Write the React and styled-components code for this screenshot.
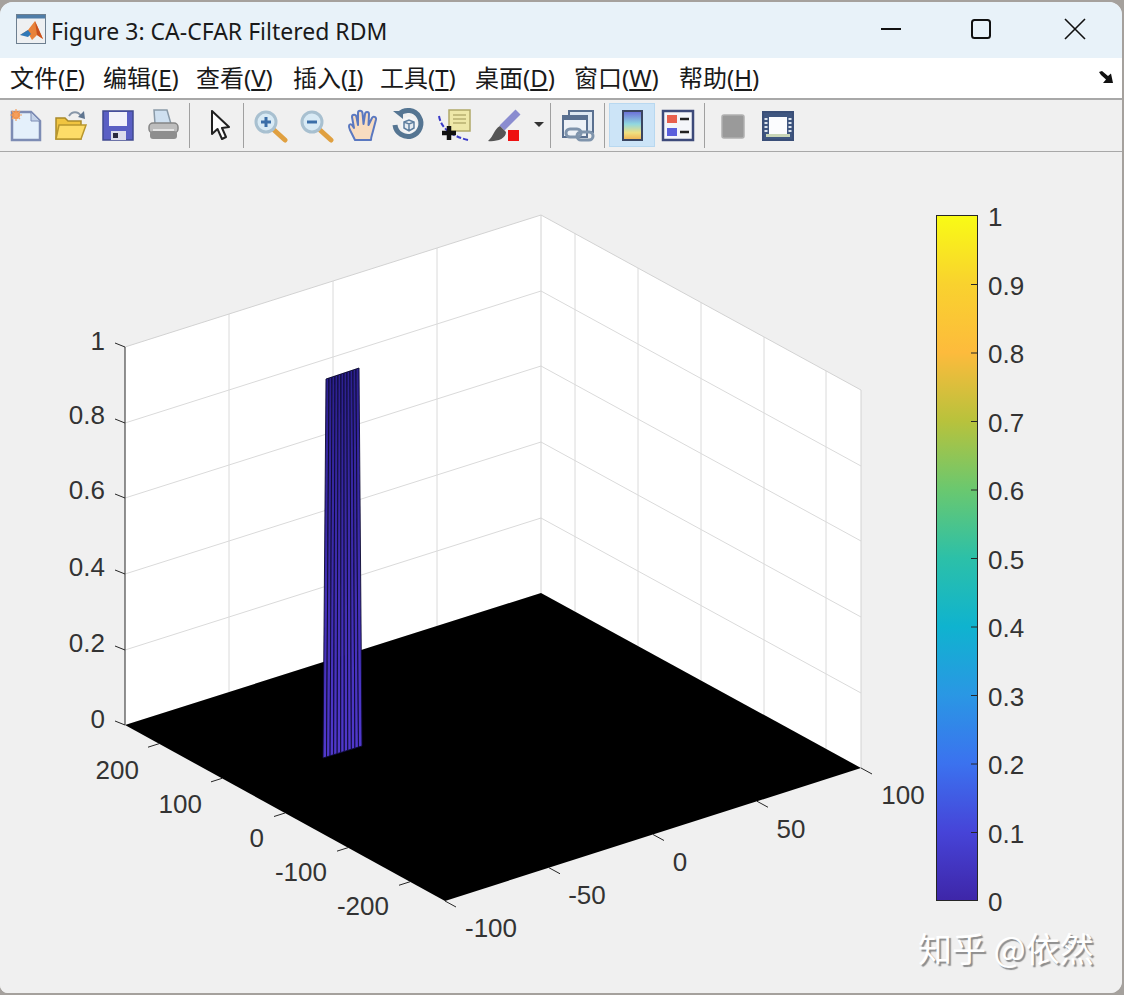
import React from "react";
import styled, { createGlobalStyle } from "styled-components";

const GlobalStyle = createGlobalStyle`
  html, body {
    margin: 0;
    padding: 0;
    background-color: #a5a19d;
  }
`;

const MENU_ITEMS = [
  ["文件", "F", 93],
  ["编辑", "E", 93],
  ["查看", "V", 97],
  ["插入", "I", 87],
  ["工具", "T", 95],
  ["桌面", "D", 99],
  ["窗口", "W", 105],
  ["帮助", "H", 84],
];

// label, tick y, label baseline
const Z_TICKS = [
  ["1", 347, 350],
  ["0.8", 423, 424],
  ["0.6", 498, 499],
  ["0.4", 574, 576],
  ["0.2", 650, 652],
  ["0", 725, 728],
];

const Y_TICKS = [
  ["200", 139, 770, 159],
  ["100", 202, 804, 222],
  ["0", 264, 838, 285],
  ["-100", 327, 872, 348],
  ["-200", 389, 906, 410],
];

const X_TICKS = [
  ["-100", 491, 928, 445],
  ["-50", 587, 895, 549],
  ["0", 680, 862, 653],
  ["50", 791, 829, 757],
  ["100", 903, 795, 861],
];

const PARULA = [
  [0, "#3e26a8"],
  [0.1, "#4644d8"],
  [0.2, "#3b72ef"],
  [0.3, "#2a97e4"],
  [0.4, "#0fb3cf"],
  [0.5, "#2cc0a8"],
  [0.6, "#6ac86f"],
  [0.7, "#b8c23c"],
  [0.8, "#fdbb3c"],
  [0.9, "#f9d22e"],
  [1, "#f9fb15"],
];

const NewIcon = () => (
  <svg width="46" height="44">
    <path d="M10 9H29L38 18V37H10Z" fill="#e4f0fb" stroke="#7d8cb4" strokeWidth="2.5" />
    <path d="M29 9V18H38Z" fill="#c4d2e8" stroke="#7d8cb4" />
    <circle cx="14" cy="12" r="4" fill="#f08a3c" />
    <path d="M14 6V18M8 12H20M10 8L18 16M18 8L10 16" stroke="#f4a060" strokeWidth="1.2" />
  </svg>
);

const OpenIcon = () => (
  <svg width="46" height="44">
    <path d="M8 15H17L20 18H33V36H8Z" fill="#f0c440" stroke="#a8892a" strokeWidth="1.5" />
    <path d="M8 36L11 22H38L33 36Z" fill="#fddc68" stroke="#b8962e" strokeWidth="1.5" />
    <path d="M21 13C24 8 30 8 33 13" fill="none" stroke="#8796a8" strokeWidth="2" />
    <path d="M30 14L37 16L36 8Z" fill="#5f7590" />
  </svg>
);

const SaveIcon = () => (
  <svg width="46" height="44">
    <rect x="9" y="8" width="30" height="29" fill="#5a5fc4" stroke="#404a90" strokeWidth="1.5" />
    <rect x="15" y="9" width="18" height="14" fill="#f2f2fa" />
    <rect x="17" y="28" width="15" height="9" fill="#dcdcec" />
    <rect x="19" y="30" width="5" height="5" fill="#2a2a40" />
  </svg>
);

const PrintIcon = () => (
  <svg width="46" height="44">
    <path d="M14 7H27L31 21H15Z" fill="#cfe0f0" stroke="#8a9aa8" strokeWidth="1.5" />
    <rect x="9" y="20" width="29" height="10" rx="4" fill="#bdbdbd" stroke="#858585" strokeWidth="1.5" />
    <rect x="10" y="28" width="27" height="8" rx="3" fill="#8e8e8e" />
    <rect x="13" y="26" width="21" height="2" fill="#e4e4e4" />
  </svg>
);

const ArrowIcon = () => (
  <svg width="46" height="44">
    <path d="M15 8V31L20.5 26L25 36L29 34L25 25L32 24Z" fill="#fff" stroke="#222" strokeWidth="2" strokeLinejoin="round" />
  </svg>
);

const LensIcon = ({ plus }) => (
  <svg width="46" height="44">
    <path d="M27 27L38 37" stroke="#e0a040" strokeWidth="5" strokeLinecap="round" />
    <circle cx="19" cy="19" r="10" fill="#d8eaf5" stroke="#a8c0d0" strokeWidth="3" />
    <path d={plus ? "M14 19H24M19 14V24" : "M14 19H24"} stroke="#3a6ea8" strokeWidth="3" />
  </svg>
);

const HandIcon = () => (
  <svg width="46" height="44">
    <path
      d="M16 37L11 27C9 23 10 20 13 22L15 25L13 14C13 11 17 11 17.5 14L19 22L19 10C19 7 23 7 23.5 10L24.5 21L26 11C26.5 8 30 8.5 30 11L29.5 22L33 15C34 12.5 37.5 14 37 16.5L34 28C33 32 32 34 32 37Z"
      fill="#f7dcc0"
      stroke="#5a78c0"
      strokeWidth="2"
      strokeLinejoin="round"
    />
  </svg>
);

const RotateIcon = () => (
  <svg width="46" height="44">
    <path d="M14 11A13 13 0 1 1 10 22" fill="none" stroke="#557592" strokeWidth="5" />
    <path d="M8 8H18V16Z" fill="#557592" />
    <circle cx="24" cy="22" r="8" fill="#f4f6f8" />
    <path d="M19 19L24 17L29 19V25L24 28L19 25ZM19 19L24 21L29 19M24 21V28" fill="#e6ecf2" stroke="#5f7f9f" strokeWidth="1.5" />
  </svg>
);

const CursorIcon = () => (
  <svg width="46" height="44">
    <path d="M8 13C10 25 20 33 37 37" fill="none" stroke="#3a3ac8" strokeWidth="2" strokeDasharray="5 2" />
    <rect x="18" y="7" width="21" height="21" fill="#eee8a8" stroke="#b0a868" strokeWidth="1.5" />
    <path d="M22 12H35M22 16H35M22 20H35" stroke="#b8b070" strokeWidth="1.5" />
    <path d="M18 23V37M11 30H25" stroke="#111" strokeWidth="4.5" />
  </svg>
);

const BrushIcon = () => (
  <svg width="46" height="44">
    <path d="M36 9L20 25" stroke="#8a8cd0" strokeWidth="7" />
    <path d="M18 23C12 26 12 33 6 38C14 39 24 36 24 29Z" fill="#555" />
    <rect x="26" y="27" width="11" height="11" fill="#ee1111" />
  </svg>
);

const DropIcon = () => (
  <svg width="18" height="44">
    <path d="M4 19H14L9 24Z" fill="#333" />
  </svg>
);

const LinkIcon = () => (
  <svg width="46" height="44">
    <rect x="14" y="8" width="24" height="21" fill="#dfe8f2" stroke="#5a7090" strokeWidth="2" />
    <rect x="8" y="13" width="24" height="21" fill="#eef2f7" stroke="#5a7090" strokeWidth="2" />
    <rect x="8" y="13" width="24" height="4" fill="#5a7090" />
    <rect x="11" y="26" width="15" height="8" rx="4" fill="none" stroke="#7f94ac" strokeWidth="3" />
    <rect x="22" y="29" width="16" height="8" rx="4" fill="none" stroke="#7f94ac" strokeWidth="3" />
  </svg>
);

const ColorbarIcon = () => (
  <svg width="46" height="44">
    <defs>
      <linearGradient id="cbIcon" x1="0" y1="0" x2="0" y2="1">
        <stop offset="0" stopColor="#6a6ad8" />
        <stop offset="0.45" stopColor="#90d8e0" />
        <stop offset="0.75" stopColor="#f0e080" />
        <stop offset="1" stopColor="#f0b050" />
      </linearGradient>
    </defs>
    <rect x="14" y="8" width="19" height="29" fill="url(#cbIcon)" stroke="#3a4560" strokeWidth="2" />
  </svg>
);

const LegendIcon = () => (
  <svg width="46" height="44">
    <rect x="8" y="8" width="30" height="29" fill="#f4f6fa" stroke="#3d4a7a" strokeWidth="2.5" />
    <rect x="12" y="12" width="10" height="8" fill="#e8604e" />
    <rect x="12" y="25" width="10" height="8" fill="#5a5fdc" />
    <path d="M25 16H34M25 29H34" stroke="#222" strokeWidth="2.5" />
  </svg>
);

const GrayBoxIcon = () => (
  <svg width="46" height="44">
    <rect x="12" y="12" width="22" height="23" rx="2" fill="#9a9a9a" stroke="#b0b0b0" strokeWidth="1.5" />
  </svg>
);

const PropertyIcon = () => (
  <svg width="46" height="44">
    <rect x="9" y="9" width="30" height="28" fill="#3f5680" stroke="#3a4f78" strokeWidth="2" />
    <rect x="15" y="14" width="18" height="17" fill="#fbfcfe" />
    <path d="M12 15V31M36 15V31" stroke="#dce4ee" strokeWidth="3" strokeDasharray="2 2" />
    <rect x="12" y="31" width="24" height="3" fill="#c9d6b8" />
  </svg>
);

const MatlabIcon = () => (
  <svg width="31" height="31" viewBox="0 0 31 31">
    <rect x="0.5" y="0.5" width="29" height="29" fill="#eef0f2" stroke="#6d7f90" />
    <rect x="1" y="1" width="28" height="3.5" fill="#4f7da8" />
    <path d="M4 21L12 16L19 7L27 25L21 21L16 26L12 19Z" fill="#e8823a" />
    <path d="M19 7L27 25L21 21Z" fill="#c8501e" />
    <path d="M4 21L12 16L15 20L12 23Z" fill="#2f78b8" />
  </svg>
);

const Plot = () => {
  const strips = Array.from({ length: 11 }, (_, i) => {
    const t0 = i / 11;
    const t1 = (i + 1) / 11;
    const topAt = (t) => [326 + 33 * t, 379 - 11 * t];
    const botAt = (t) => [323 + 39 * t, 758 - 12 * t];
    const pts = [topAt(t0), topAt(t1), botAt(t1), botAt(t0)];
    return pts.map((p) => p.join(",")).join(" ");
  });

  return (
    <PlotSvg viewBox="0 152 1122 841">
      <defs>
        <linearGradient id="barFill" x1="0" y1="0" x2="0" y2="1" gradientUnits="objectBoundingBox">
          <stop offset="0" stopColor="#2c2090" />
          <stop offset="1" stopColor="#5038cc" />
        </linearGradient>
        <linearGradient id="parula" x1="0" y1="1" x2="0" y2="0">
          {PARULA.map(([o, c]) => (
            <stop key={o} offset={o} stopColor={c} />
          ))}
        </linearGradient>
      </defs>

      <polygon points="125,347 541,215 541,593 125,725" fill="#fff" />
      <polygon points="541,215 861,390 861,768 541,593" fill="#fff" />

      {[423, 498, 574, 650].map((y) => (
        <polyline key={y} points={`125,${y} 541,${y - 132} 861,${y + 43}`} fill="none" stroke="#dadada" />
      ))}
      {[229, 333, 437].map((x) => {
        const top = 347 - (x - 125) * 0.3173;
        return <line key={x} x1={x} y1={top} x2={x} y2={top + 378} stroke="#dadada" />;
      })}
      {[575, 638, 701, 764, 826].map((x) => {
        const top = 215 + (x - 541) * 0.547;
        return <line key={x} x1={x} y1={top} x2={x} y2={top + 378} stroke="#dadada" />;
      })}
      <polyline points="125,347 541,215 861,390 861,768" fill="none" stroke="#d2d2d2" />
      <line x1="541" y1="215" x2="541" y2="593" stroke="#d2d2d2" />

      <polygon points="125,725 541,593 861,768 445,901" fill="#000" />
      {strips.map((pts) => (
        <polygon key={pts} points={pts} fill="url(#barFill)" stroke="#0c0a30" strokeWidth="0.9" />
      ))}

      <line x1="125" y1="347" x2="125" y2="725" stroke="#262626" />
      {Z_TICKS.map(([label, y, base]) => (
        <g key={label}>
          <line x1="125" y1={y} x2="115" y2={y - 4} stroke="#262626" />
          <TickText x="105" y={base} textAnchor="end">
            {label}
          </TickText>
        </g>
      ))}
      {Y_TICKS.map(([label, tx, ty, ex]) => {
        const ey = 725 + (ex - 125) * 0.55;
        return (
          <g key={label}>
            <line x1={ex} y1={ey} x2={ex - 11} y2={ey + 3.5} stroke="#262626" />
            <TickText x={tx} y={ty + 9} textAnchor="end">
              {label}
            </TickText>
          </g>
        );
      })}
      {X_TICKS.map(([label, tx, ty, ex]) => {
        const ey = 901 - (ex - 445) * 0.3197;
        return (
          <g key={label}>
            <line x1={ex} y1={ey} x2={ex + 11} y2={ey + 6} stroke="#262626" />
            <TickText x={tx} y={ty + 9} textAnchor="middle">
              {label}
            </TickText>
          </g>
        );
      })}

      <rect x="936.5" y="215.5" width="41" height="685" fill="url(#parula)" stroke="#262626" />
      {Array.from({ length: 11 }, (_, i) => {
        const y = 901 - i * 68.5;
        const label = i === 0 ? "0" : i === 10 ? "1" : (i / 10).toFixed(1);
        return (
          <g key={label}>
            {i > 0 && i < 10 && <line x1="971" y1={y} x2="977" y2={y} stroke="#262626" />}
            <TickText x="988" y={y + 10}>
              {label}
            </TickText>
          </g>
        );
      })}
    </PlotSvg>
  );
};

export default function App() {
  return (
    <Page>
      <GlobalStyle />
      <Window>
        <TitleBar>
          <TitleIcon>
            <MatlabIcon />
          </TitleIcon>
          <TitleText>Figure 3: CA-CFAR Filtered RDM</TitleText>
          <WindowButton $w={86}>
            <svg width="22" height="22">
              <path d="M1 11H21" stroke="#111" strokeWidth="2" />
            </svg>
          </WindowButton>
          <WindowButton $w={94}>
            <svg width="22" height="22">
              <rect x="2" y="2" width="18" height="18" rx="2.5" fill="none" stroke="#111" strokeWidth="2" />
            </svg>
          </WindowButton>
          <WindowButton $w={94}>
            <svg width="22" height="22">
              <path d="M1 1L21 21M21 1L1 21" stroke="#111" strokeWidth="1.6" />
            </svg>
          </WindowButton>
        </TitleBar>

        <MenuBar>
          {MENU_ITEMS.map(([label, key, width]) => (
            <MenuItem key={key} $w={width}>
              {label}(<u>{key}</u>)
            </MenuItem>
          ))}
          <DockArrow>
            <svg width="16" height="14" viewBox="0 0 16 14">
              <path d="M1 2L4 1L10 6L13 3.5L15 13L5 13L8 9.5L3 5Z" fill="#111" />
            </svg>
          </DockArrow>
        </MenuBar>

        <ToolBar>
          <ToolButton><NewIcon /></ToolButton>
          <ToolButton><OpenIcon /></ToolButton>
          <ToolButton><SaveIcon /></ToolButton>
          <ToolButton><PrintIcon /></ToolButton>
          <Separator $before={3} $after={7} />
          <ToolButton><ArrowIcon /></ToolButton>
          <Separator $before={0} $after={3} />
          <ToolButton><LensIcon plus /></ToolButton>
          <ToolButton><LensIcon /></ToolButton>
          <ToolButton><HandIcon /></ToolButton>
          <ToolButton><RotateIcon /></ToolButton>
          <ToolButton><CursorIcon /></ToolButton>
          <ToolButton $left={5}><BrushIcon /></ToolButton>
          <DropButton><DropIcon /></DropButton>
          <Separator $before={2} $after={4} />
          <ToolButton><LinkIcon /></ToolButton>
          <Separator $before={3} $after={4} />
          <ToolButton $active><ColorbarIcon /></ToolButton>
          <ToolButton><LegendIcon /></ToolButton>
          <Separator $before={3} $after={5} />
          <ToolButton><GrayBoxIcon /></ToolButton>
          <ToolButton $left={-2}><PropertyIcon /></ToolButton>
        </ToolBar>

        <Canvas>
          <Plot />
          <Watermark>知乎 @依然</Watermark>
        </Canvas>
      </Window>
    </Page>
  );
}

const Page = styled.div`
  width: 1124px;
  height: 995px;
  padding: 2px 2px 2px 0;
  box-sizing: border-box;
  overflow: hidden;
`;

const Window = styled.div`
  height: 100%;
  display: flex;
  flex-direction: column;
  background-color: #f0f0f0;
  border-radius: 13px 13px 12px 8px;
  overflow: hidden;
  font-family: "Noto Sans", "Noto Sans CJK SC", sans-serif;
  color: #1a1a1a;
`;

const TitleBar = styled.div`
  height: 56px;
  flex-shrink: 0;
  box-sizing: border-box;
  display: flex;
  align-items: center;
  background-color: #e8f2f9;
  padding: 0 0 2px 16px;
`;

const TitleIcon = styled.div`
  display: flex;
  width: 35px;
`;

const TitleText = styled.div`
  flex: 1;
  font-size: 23px;
  padding-top: 4px;
  white-space: nowrap;
`;

const WindowButton = styled.div`
  width: ${({ $w }) => $w}px;
  height: 54px;
  display: flex;
  align-items: center;
  justify-content: center;
`;

const MenuBar = styled.div`
  height: 42px;
  flex-shrink: 0;
  box-sizing: border-box;
  display: flex;
  align-items: center;
  padding: 0 8px 3px 10px;
  background-color: #fff;
  border-bottom: 2px solid #a8a8a8;
`;

const MenuItem = styled.span`
  width: ${({ $w }) => $w}px;
  font-size: 24px;
  white-space: nowrap;
`;

const DockArrow = styled.div`
  margin-left: auto;
  display: flex;
`;

const ToolBar = styled.div`
  height: 52px;
  flex-shrink: 0;
  display: flex;
  align-items: flex-start;
  padding: 3px 0 0 2px;
  box-sizing: border-box;
  background-color: #f0f0f0;
  border-bottom: 1px solid #a8a8a8;

  svg {
    filter: blur(0.6px);
  }
`;

const ToolButton = styled.div`
  width: 46px;
  height: 44px;
  flex-shrink: 0;
  box-sizing: border-box;
  margin-left: ${({ $left }) => $left || 0}px;
  background-color: ${({ $active }) => ($active ? "#cce4f7" : "transparent")};
  box-shadow: ${({ $active }) => ($active ? "inset 0 0 0 1px #b8d8f0" : "none")};
`;

const DropButton = styled.div`
  width: 18px;
  height: 44px;
  margin-left: 2px;
`;

const Separator = styled.div`
  width: 1px;
  height: 45px;
  flex-shrink: 0;
  background-color: #a0a0a0;
  margin-left: ${({ $before }) => $before}px;
  margin-right: ${({ $after }) => $after}px;
`;

const Canvas = styled.div`
  flex: 1;
  position: relative;
  background-color: #f0f0f0;
`;

const PlotSvg = styled.svg`
  display: block;
  width: 1122px;
  height: 841px;
`;

const TickText = styled.text`
  font-family: "Liberation Sans", Arial, sans-serif;
  font-size: 26px;
  fill: #333;
`;

const Watermark = styled.div`
  position: absolute;
  left: 918px;
  top: 771px;
  font-family: "Noto Sans CJK SC", "Noto Sans", sans-serif;
  font-size: 34px;
  color: #fff;
  white-space: nowrap;
  text-shadow: 2px 2px 1px #8c8c8c;
`;
